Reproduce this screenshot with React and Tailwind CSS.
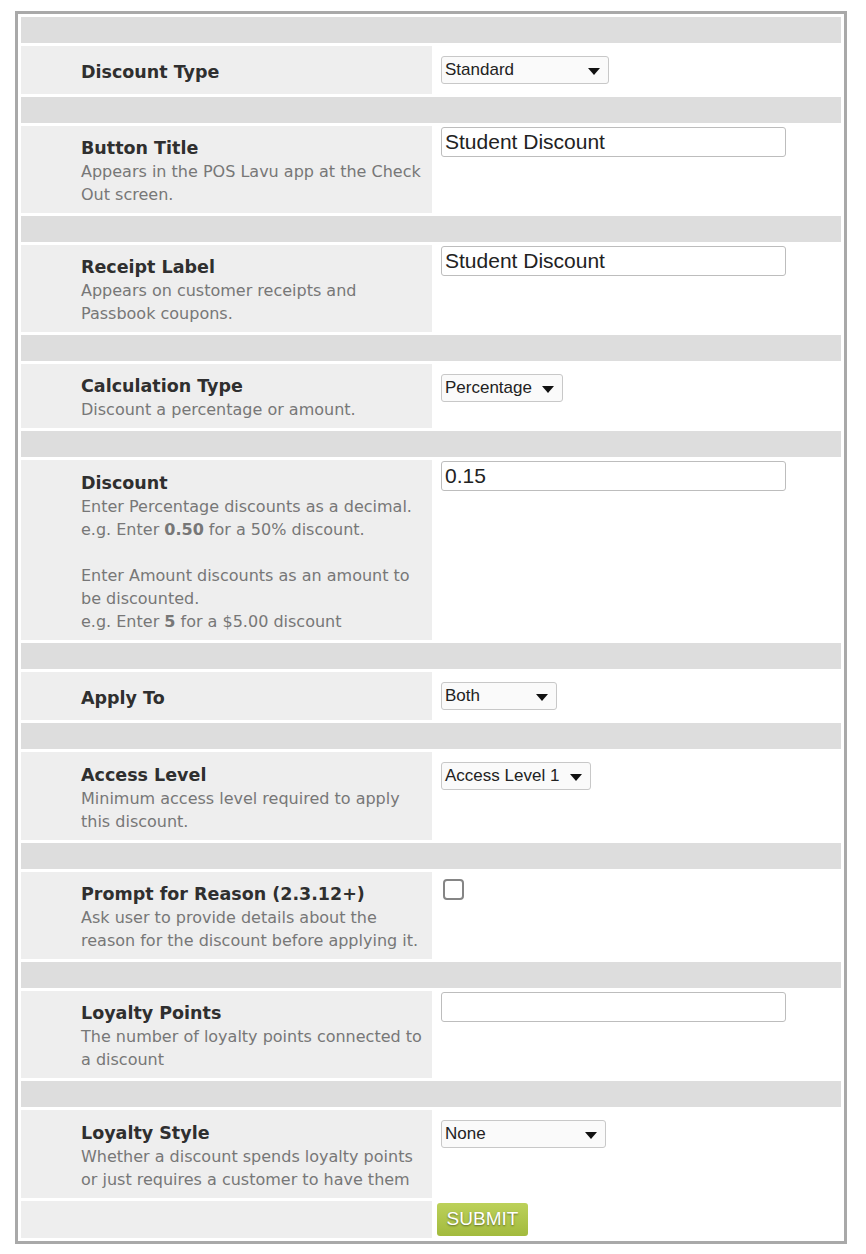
import React from 'react';

const label = "font-['DejaVu_Sans',Verdana,sans-serif]";
const field = "font-['Liberation_Sans',Arial,sans-serif]";

const Band = () => <div className="col-span-2 h-[26px] bg-[#dddddd]" />;

// tall = one extra pixel at the top, to keep rows in step with the reference
const Label = ({ title, children, tall }) => (
  <div
    className={`${label} bg-[#eeeeee] pl-[60px] pr-2 ${tall ? 'pt-[12px]' : 'pt-[11px]'} pb-[7px] flex flex-col justify-center leading-[23px]`}
  >
    <div className="text-[17.5px] font-bold text-[#2f2f2f]">{title}</div>
    {children && <div className="text-[16px] text-[#777]">{children}</div>}
  </div>
);

const Select = ({ value, width }) => (
  <div
    className={`${field} relative my-[10px] h-[28px] rounded-[3px] border border-[#c8c8c8] bg-[#fafafa] pl-[3px] flex items-center text-[17px] text-[#222]`}
    style={{ width }}
  >
    {value}
    <svg className="absolute right-[8px] top-[11px]" width="12" height="7" viewBox="0 0 12 7">
      <path d="M0 0h12L6 7z" fill="#111" />
    </svg>
  </div>
);

const TextInput = ({ value }) => (
  <div className={`${field} mt-[1px] h-[30px] w-[345px] rounded-[3px] border border-[#bdbdbd] bg-white pl-[3px] flex items-center text-[21px] text-[#222]`}>
    {value}
  </div>
);

const Value = ({ children }) => <div className="bg-white pl-[6px] flex flex-col items-start">{children}</div>;

export default function App() {
  return (
    <div className="bg-white min-h-[1254px] pt-[11px] pl-[15px]">
      <div className="w-[832px] border-[3px] border-[#a9a9a9] p-[3px]">
        <div className="grid grid-cols-[411px_406px] gap-[3px]">
          <Band />
          <Label title="Discount Type" />
          <Value><Select value="Standard" width={168} /></Value>

          <Band />
          <Label title="Button Title">Appears in the POS Lavu app at the Check Out screen.</Label>
          <Value><TextInput value="Student Discount" /></Value>

          <Band />
          <Label title="Receipt Label">Appears on customer receipts and Passbook coupons.</Label>
          <Value><TextInput value="Student Discount" /></Value>

          <Band />
          <Label title="Calculation Type">Discount a percentage or amount.</Label>
          <Value><Select value="Percentage" width={122} /></Value>

          <Band />
          <Label title="Discount" tall>
            Enter Percentage discounts as a decimal.
            <br />
            e.g. Enter <b>0.50</b> for a 50% discount.
            <br />
            <br />
            Enter Amount discounts as an amount to be discounted.
            <br />
            e.g. Enter <b>5</b> for a $5.00 discount
          </Label>
          <Value><TextInput value="0.15" /></Value>

          <Band />
          <Label title="Apply To" />
          <Value><Select value="Both" width={116} /></Value>

          <Band />
          <Label title="Access Level" tall>Minimum access level required to apply this discount.</Label>
          <Value><Select value="Access Level 1" width={150} /></Value>

          <Band />
          <Label title="Prompt for Reason (2.3.12+)">
            Ask user to provide details about the reason for the discount before applying it.
          </Label>
          <Value>
            <div className="ml-[2px] mt-[7px] h-[21px] w-[21px] rounded-[4px] border-2 border-[#858585] bg-white" />
          </Value>

          <Band />
          <Label title="Loyalty Points">The number of loyalty points connected to a discount</Label>
          <Value><TextInput value="" /></Value>

          <Band />
          <Label title="Loyalty Style" tall>
            Whether a discount spends loyalty points or just requires a customer to have them
          </Label>
          <Value><Select value="None" width={165} /></Value>

          <div className="bg-[#eeeeee] h-[37px]" />
          <div className="bg-white pl-[2px] pt-[2px]">
            <button
              className={`${field} h-[33px] w-[91px] rounded-[3px] bg-gradient-to-b from-[#bcd15a] to-[#a2ba3d] text-[19px] text-white [text-shadow:0_1px_2px_rgba(0,0,0,0.45)]`}
            >
              SUBMIT
            </button>
          </div>
        </div>
      </div>
    </div>
  );
}
